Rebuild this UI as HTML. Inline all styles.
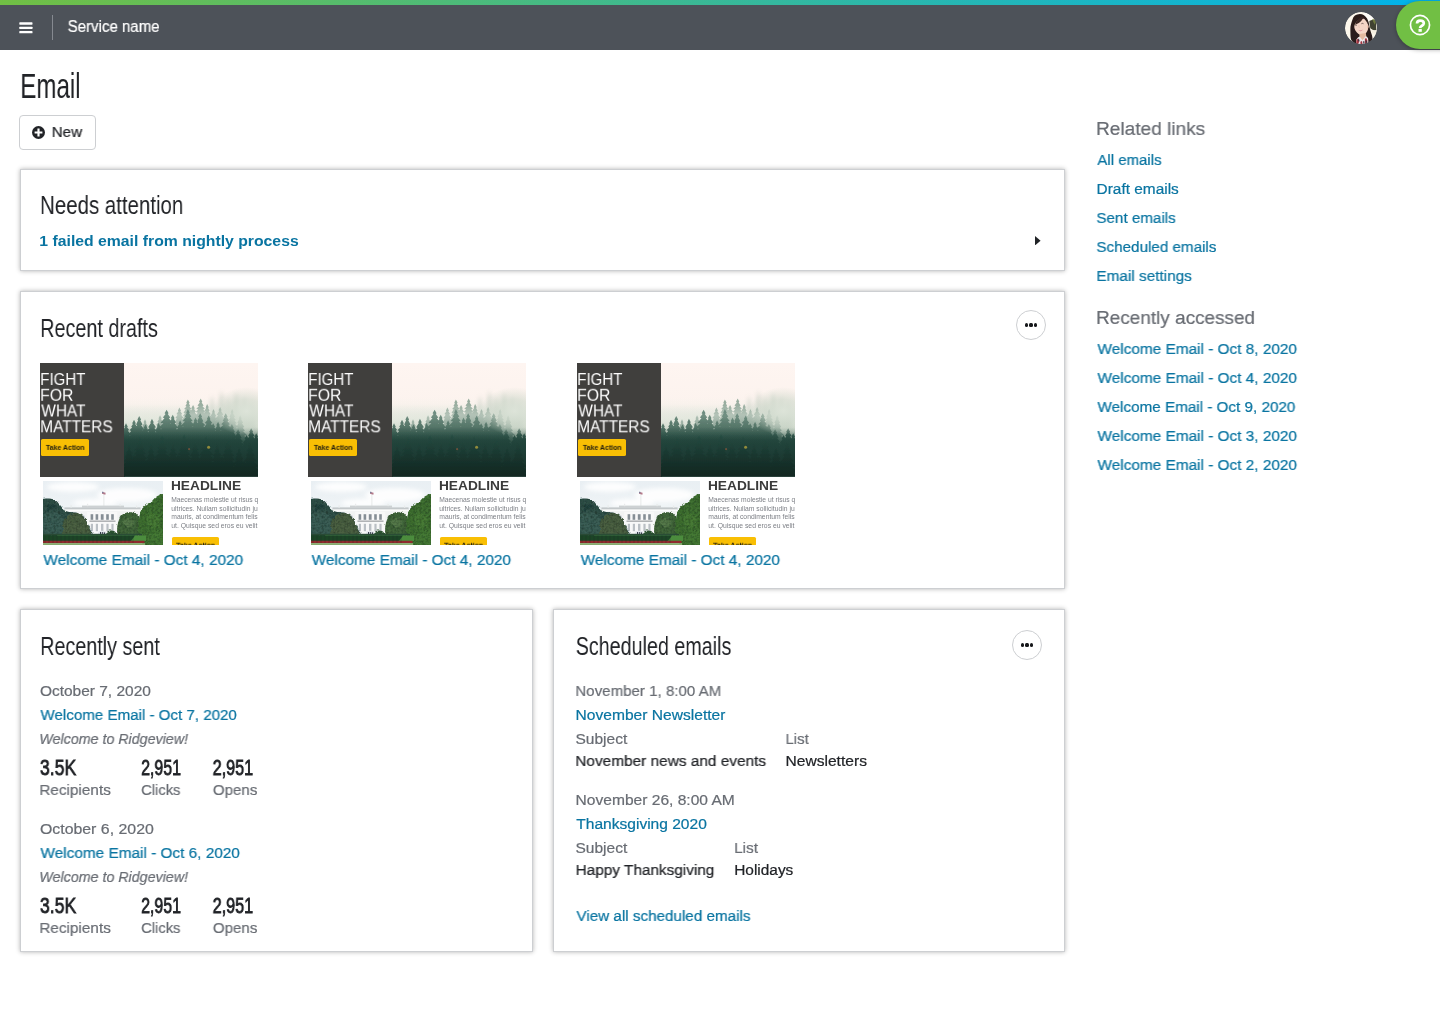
<!DOCTYPE html>
<html lang="en"><head><meta charset="utf-8"><title>Email</title>
<style>
html,body{margin:0;padding:0}
body{width:1440px;height:1032px;position:relative;overflow:hidden;background:#fff;font-family:"Liberation Sans",sans-serif;color:#212327;font-size:15px}
h1,h2,h3,p,button,em,a{margin:0;padding:0;font:inherit}
.t{will-change:transform;position:absolute;display:block;white-space:nowrap;line-height:1;transform-origin:0 0;font-family:"Liberation Sans",sans-serif;font-weight:400;font-style:normal;text-decoration:none;color:#212327}
.t.hd,.thumb .t{-webkit-text-stroke:0}
.t[style*="font-weight:700"]{-webkit-text-stroke:0}
.t{-webkit-text-stroke:.22px currentColor}
.t.lk{color:#0974a1}
.t.gr{color:#686c73}
.t.wh{color:#fff}
.t.num{font-weight:400;color:#212327;-webkit-text-stroke:.85px currentColor}
em.t{font-style:italic}
#topbar{position:absolute;left:0;top:0;width:1440px;height:50px;background:#4d5259}
#rainbow{position:absolute;left:0;top:0;width:1440px;height:5px;background:linear-gradient(to right,#71bf44 0,#00b2ec 100%)}
#burger{position:absolute;left:19px;top:22px;width:16px;height:14px}
#burger svg{display:block}
#vdiv{position:absolute;left:52px;top:15px;width:1px;height:25px;background:#858990}
#avatar{position:absolute;left:1344.8px;top:11.8px;width:32.4px;height:32.4px;border-radius:50%;overflow:hidden}
#avatar svg{display:block}
#help{position:absolute;left:1396px;top:1px;width:60px;height:48px;border-radius:24px 0 0 24px;background:#71bf44;box-shadow:0 1px 4px rgba(0,0,0,.3)}
#help svg{position:absolute;left:13.3px;top:13.4px}
#newbtn{position:absolute;left:19px;top:115px;width:77px;height:35px;box-sizing:border-box;border:1px solid #cdcfd2;border-radius:4px;background:#fff;display:block}
#newbtn svg{position:absolute;left:11.9px;top:10px}
#newbtn .t{margin:-1px 0 0 -1px}
.card{position:absolute;box-sizing:border-box;background:#fff;border:1px solid #cdcfd2;box-shadow:0 0 4.5px rgba(0,0,0,.3)}
.card .t{margin:-1px 0 0 -1px}
.caret{position:absolute;margin:-1px 0 0 -1px;display:block}
.more{position:absolute;margin:-1px 0 0 -1px;width:30px;height:30px;box-sizing:border-box;border:1px solid #cdcfd2;border-radius:50%;background:#fff}
.more i{position:absolute;top:12.1px;width:3.3px;height:3.8px;border-radius:1.5px;background:#15171a}
.more i:nth-child(1){left:7.9px}.more i:nth-child(2){left:12.35px}.more i:nth-child(3){left:16.8px}
.thumb{position:absolute;margin:-1px 0 0 -1px;width:218.1px;height:181.8px;overflow:hidden;background:#fff}
.thumb .dark{position:absolute;left:0;top:0;width:85px;height:113.6px;background:#403f3d}
.thumb .forest{position:absolute;left:84.2px;top:0;display:block}
.thumb .wh{position:absolute;left:3px;top:118px;display:block}
.thumb .t{margin:0}
.thumb .hero{color:#fff}
.thumb .btn{position:absolute;background:#f9bf04;border-radius:1.6px}
.thumb .bt{color:#1c1a12;font-weight:700}
.thumb .hl{color:#3b3b3b;font-weight:700}
.thumb .pp{color:#7c7f85}

</style></head>
<body>
<svg width="0" height="0" style="position:absolute" aria-hidden="true"><defs>
<linearGradient id="fsky" x1="0" y1="0" x2="0" y2="1"><stop offset="0" stop-color="#fef5f1"/><stop offset=".36" stop-color="#fcf3ee"/><stop offset=".5" stop-color="#e6e9df"/><stop offset=".66" stop-color="#b4c3b3"/><stop offset="1" stop-color="#7f9886"/></linearGradient>
<linearGradient id="fdk" x1="0" y1="0" x2="0" y2="1"><stop offset="0" stop-color="#12261f" stop-opacity="0"/><stop offset=".6" stop-color="#12261f" stop-opacity="0"/><stop offset="1" stop-color="#12261f" stop-opacity=".55"/></linearGradient>
<radialGradient id="ffog" cx=".5" cy=".5" r=".5"><stop offset="0" stop-color="#dde4d9" stop-opacity=".92"/><stop offset=".5" stop-color="#cfd9cc" stop-opacity=".62"/><stop offset="1" stop-color="#cfd8cb" stop-opacity="0"/></radialGradient>
<linearGradient id="ffg" gradientUnits="userSpaceOnUse" x1="0" y1="34" x2="0" y2="84"><stop offset="0" stop-color="#8aa393"/><stop offset=".5" stop-color="#56796a"/><stop offset="1" stop-color="#2f564a"/></linearGradient>
<linearGradient id="fmid" gradientUnits="userSpaceOnUse" x1="0" y1="44" x2="0" y2="92"><stop offset="0" stop-color="#64877a"/><stop offset=".3" stop-color="#3b6254"/><stop offset=".7" stop-color="#264a40"/><stop offset="1" stop-color="#1d3d35"/></linearGradient>
<linearGradient id="ffront" gradientUnits="userSpaceOnUse" x1="0" y1="68" x2="0" y2="113"><stop offset="0" stop-color="#2a5247"/><stop offset=".5" stop-color="#1d3f37"/><stop offset="1" stop-color="#132a25"/></linearGradient>
<linearGradient id="fhaze" x1="0" y1="0" x2="0" y2="1"><stop offset="0" stop-color="#eef0e9" stop-opacity="0"/><stop offset=".35" stop-color="#e3e8df" stop-opacity=".45"/><stop offset="1" stop-color="#dfe5dc" stop-opacity="0"/></linearGradient>
<linearGradient id="fhaze2" x1="0" y1="0" x2="0" y2="1"><stop offset="0" stop-color="#e3e9df" stop-opacity=".0"/><stop offset=".3" stop-color="#dfe6db" stop-opacity=".26"/><stop offset=".6" stop-color="#d5ded2" stop-opacity=".2"/><stop offset="1" stop-color="#cfd9cc" stop-opacity="0"/></linearGradient>
<linearGradient id="fmass" x1="0" y1="0" x2="0" y2="1"><stop offset="0" stop-color="#244a40" stop-opacity="0"/><stop offset=".45" stop-color="#234840" stop-opacity=".9"/><stop offset="1" stop-color="#193731"/></linearGradient>
<linearGradient id="wsky" x1="0" y1="0" x2="0" y2="1"><stop offset="0" stop-color="#e9eff3"/><stop offset=".5" stop-color="#f0f4f6"/><stop offset="1" stop-color="#f5f7f7"/></linearGradient>
<filter id="leaf" x="-5%" y="-5%" width="110%" height="110%"><feTurbulence type="fractalNoise" baseFrequency=".32" numOctaves="2" seed="3" result="n"/><feDisplacementMap in="SourceGraphic" in2="n" scale="3.2" xChannelSelector="R" yChannelSelector="G" result="d"/><feTurbulence type="fractalNoise" baseFrequency=".45" numOctaves="2" seed="8" result="n2"/><feColorMatrix in="n2" type="matrix" values="0 0 0 0 0  0 0 0 0 0  0 0 0 0 0  1.8 0 0 0 -.66" result="m"/><feComposite in="m" in2="d" operator="in" result="dk"/><feFlood flood-color="#10221a" flood-opacity=".7"/><feComposite in2="dk" operator="in" result="dk2"/><feMerge><feMergeNode in="d"/><feMergeNode in="dk2"/></feMerge><feGaussianBlur stdDeviation=".3"/></filter>
<filter id="fb0" x="-5%" y="-5%" width="110%" height="110%"><feGaussianBlur stdDeviation=".35"/></filter>
<filter id="fb05" x="-5%" y="-5%" width="110%" height="110%"><feGaussianBlur stdDeviation=".7"/></filter>
<filter id="fb1" x="-5%" y="-5%" width="110%" height="110%"><feGaussianBlur stdDeviation=".9"/></filter>
<filter id="fb2" x="-10%" y="-10%" width="120%" height="120%"><feGaussianBlur stdDeviation="2.2"/></filter>
<symbol id="forest" viewBox="0 0 133.9 113.3" preserveAspectRatio="none">
<rect width="133.9" height="113.3" fill="url(#fsky)"/>
<g filter="url(#fb2)" fill="#93ab9a" opacity=".42"><path d="M97.3 28.3 L98.3 31.0 L97.9 31.5 L99.2 35.1 L98.4 35.7 L99.7 38.7 L98.7 39.2 L100.8 42.3 L99.4 42.8 L100.8 45.4 L99.4 45.9 L101.4 49.1 L99.8 49.6 L103.0 53.3 L100.7 53.8 L102.6 56.1 L100.5 56.6 L103.4 58.8 L100.9 59.3 L104.3 61.4 L101.5 61.9 L105.2 65.3 L102.1 65.9 L105.8 68.3 L88.8 68.3 L92.5 65.9 L89.1 65.3 L93.1 61.9 L90.4 61.4 L93.7 59.3 L91.6 58.8 L94.1 56.6 L92.0 56.1 L93.9 53.8 L91.4 53.3 L94.8 49.6 L92.7 49.1 L95.2 45.9 L93.5 45.4 L95.2 42.8 L94.1 42.3 L95.9 39.2 L94.9 38.7 L96.2 35.7 L95.4 35.1 L96.7 31.5 L96.2 31.0Z M112.0 29.3 L113.1 32.0 L112.6 32.5 L113.8 35.0 L113.1 35.6 L114.6 39.0 L113.5 39.5 L114.9 42.0 L113.7 42.5 L115.7 45.8 L114.2 46.3 L117.0 49.0 L115.0 49.5 L116.6 51.6 L114.8 52.1 L118.3 54.9 L115.8 55.4 L118.4 57.6 L115.8 58.1 L118.0 60.6 L115.6 61.1 L120.1 64.8 L116.9 65.3 L119.3 67.8 L116.4 68.3 L120.5 69.3 L103.5 69.3 L107.6 68.3 L105.4 67.8 L107.1 65.3 L104.6 64.8 L108.4 61.1 L106.2 60.6 L108.2 58.1 L105.2 57.6 L108.2 55.4 L105.8 54.9 L109.2 52.1 L107.0 51.6 L109.0 49.5 L106.6 49.0 L109.8 46.3 L108.0 45.8 L110.3 42.5 L109.4 42.0 L110.5 39.5 L109.6 39.0 L110.9 35.6 L110.0 35.0 L111.4 32.5 L110.9 32.0Z M104.0 33.0 L105.0 35.7 L104.6 36.2 L105.6 39.0 L105.0 39.5 L106.3 41.8 L105.4 42.3 L106.7 45.1 L105.6 45.6 L108.0 49.3 L106.4 49.8 L108.2 53.3 L106.5 53.8 L109.6 57.3 L107.3 57.8 L109.8 61.6 L107.5 62.1 L110.7 65.4 L108.0 65.9 L110.7 68.1 L108.0 68.6 L112.3 71.1 L109.0 71.6 L112.5 73.0 L95.5 73.0 L99.0 71.6 L95.9 71.1 L100.0 68.6 L97.2 68.1 L100.0 65.9 L97.7 65.4 L100.5 62.1 L98.6 61.6 L100.7 57.8 L99.0 57.3 L101.5 53.8 L99.9 53.3 L101.6 49.8 L100.2 49.3 L102.4 45.6 L101.4 45.1 L102.6 42.3 L101.9 41.8 L103.0 39.5 L102.3 39.0 L103.4 36.2 L103.0 35.7Z M120.0 34.0 L121.1 36.7 L120.7 37.2 L121.9 40.2 L121.1 40.8 L122.5 43.1 L121.5 43.6 L122.7 46.0 L121.6 46.5 L123.5 50.2 L122.1 50.7 L124.7 54.2 L122.8 54.7 L124.5 57.0 L122.7 57.5 L126.0 59.9 L123.6 60.4 L126.6 63.9 L124.0 64.4 L127.4 66.7 L124.5 67.2 L127.7 69.7 L124.6 70.2 L127.9 73.2 L124.7 73.8 L128.5 74.0 L111.5 74.0 L115.3 73.8 L111.3 73.2 L115.4 70.2 L111.6 69.7 L115.5 67.2 L113.3 66.7 L116.0 64.4 L113.7 63.9 L116.4 60.4 L114.4 59.9 L117.3 57.5 L115.0 57.0 L117.2 54.7 L115.4 54.2 L117.9 50.7 L116.2 50.2 L118.4 46.5 L117.1 46.0 L118.5 43.6 L117.3 43.1 L118.9 40.8 L118.3 40.2 L119.3 37.2 L118.9 36.7Z M88.0 33.0 L89.0 35.7 L88.6 36.2 L89.6 39.0 L88.9 39.5 L90.4 42.2 L89.4 42.7 L91.2 45.4 L89.9 45.9 L91.9 49.0 L90.3 49.5 L91.8 51.8 L90.3 52.3 L93.3 55.9 L91.2 56.4 L93.8 58.5 L91.5 59.0 L94.1 62.3 L91.6 62.8 L95.0 65.0 L92.2 65.5 L96.2 69.1 L92.9 69.6 L97.4 73.0 L93.7 73.5 L96.5 73.0 L79.5 73.0 L82.3 73.5 L78.9 73.0 L83.1 69.6 L79.4 69.1 L83.8 65.5 L80.6 65.0 L84.4 62.8 L81.2 62.3 L84.5 59.0 L82.2 58.5 L84.8 56.4 L82.1 55.9 L85.7 52.3 L84.7 51.8 L85.7 49.5 L84.0 49.0 L86.1 45.9 L84.4 45.4 L86.6 42.7 L85.8 42.2 L87.1 39.5 L86.6 39.0 L87.4 36.2 L87.1 35.7Z M127.0 38.0 L128.1 40.7 L127.7 41.2 L128.8 44.0 L128.1 44.5 L129.5 47.5 L128.5 48.0 L130.2 51.0 L128.9 51.6 L131.3 54.7 L129.6 55.2 L131.5 58.5 L129.7 59.0 L132.2 62.0 L130.1 62.5 L133.2 64.7 L130.7 65.2 L133.5 68.3 L130.9 68.8 L134.3 72.0 L131.4 72.5 L134.6 76.1 L131.6 76.6 L135.5 78.0 L118.5 78.0 L122.4 76.6 L120.3 76.1 L122.6 72.5 L119.5 72.0 L123.1 68.8 L120.9 68.3 L123.3 65.2 L121.5 64.7 L123.9 62.5 L121.4 62.0 L124.3 59.0 L122.3 58.5 L124.4 55.2 L122.3 54.7 L125.1 51.6 L124.1 51.0 L125.5 48.0 L124.6 47.5 L125.9 44.5 L125.1 44.0 L126.3 41.2 L125.8 40.7Z"/></g>
<g filter="url(#fb05)" opacity=".9"><path fill="url(#ffg)" d="M55.3 44.4 L56.9 47.6 L56.2 48.2 L58.1 50.9 L57.0 51.5 L59.5 54.8 L57.8 55.4 L60.1 59.2 L58.2 59.8 L62.7 63.8 L59.7 64.4 L63.4 67.5 L60.1 68.1 L64.2 70.8 L60.7 71.4 L66.3 75.5 L61.9 76.1 L65.9 79.1 L61.6 79.7 L67.0 82.6 L62.3 83.2 L69.4 86.9 L63.7 87.5 L70.5 90.4 L40.1 90.4 L46.9 87.5 L41.9 86.9 L48.3 83.2 L43.8 82.6 L49.0 79.7 L44.9 79.1 L48.7 76.1 L43.1 75.5 L49.9 71.4 L45.6 70.8 L50.5 68.1 L47.6 67.5 L50.9 64.4 L47.2 63.8 L52.4 59.8 L50.6 59.2 L52.8 55.4 L51.3 54.8 L53.6 51.5 L52.4 50.9 L54.4 48.2 L53.8 47.6Z M63.8 36.5 L65.5 39.7 L64.8 40.3 L66.1 42.8 L65.2 43.4 L67.5 45.9 L66.0 46.5 L68.8 49.6 L66.8 50.2 L69.5 52.8 L67.2 53.4 L70.5 57.5 L67.8 58.1 L72.3 60.6 L68.9 61.2 L73.8 64.8 L69.8 65.4 L75.5 69.8 L70.8 70.4 L75.1 73.7 L70.6 74.3 L78.3 77.6 L72.5 78.2 L78.0 81.2 L72.3 81.8 L79.0 82.5 L48.6 82.5 L55.3 81.8 L48.9 81.2 L55.1 78.2 L50.5 77.6 L57.0 74.3 L53.8 73.7 L56.8 70.4 L53.0 69.8 L57.8 65.4 L53.1 64.8 L58.7 61.2 L55.4 60.6 L59.8 58.1 L57.7 57.5 L60.4 53.4 L58.8 52.8 L60.8 50.2 L59.4 49.6 L61.6 46.5 L60.0 45.9 L62.4 43.4 L61.3 42.8 L62.8 40.3 L62.2 39.7Z M76.6 35.5 L78.2 38.7 L77.5 39.3 L79.5 42.5 L78.4 43.1 L80.7 45.7 L79.1 46.3 L81.3 48.9 L79.4 49.5 L82.7 53.7 L80.3 54.3 L85.1 58.5 L81.7 59.1 L86.1 62.4 L82.3 63.0 L88.0 66.9 L83.5 67.5 L87.6 71.3 L83.2 71.9 L91.9 76.3 L85.8 76.9 L90.9 80.8 L85.2 81.4 L91.8 81.5 L61.4 81.5 L68.0 81.4 L60.9 80.8 L67.4 76.9 L61.2 76.3 L70.0 71.9 L64.5 71.3 L69.7 67.5 L64.8 66.9 L70.9 63.0 L67.8 62.4 L71.5 59.1 L67.2 58.5 L72.9 54.3 L70.4 53.7 L73.8 49.5 L71.7 48.9 L74.1 46.3 L72.2 45.7 L74.8 43.1 L73.4 42.5 L75.7 39.3 L74.9 38.7Z M89.3 45.8 L90.8 49.0 L90.2 49.6 L92.1 52.9 L91.0 53.5 L92.9 56.9 L91.4 57.5 L94.7 60.0 L92.6 60.6 L96.0 63.7 L93.3 64.3 L96.6 67.0 L93.7 67.6 L98.5 71.6 L94.8 72.2 L100.5 75.6 L96.0 76.2 L100.5 79.1 L96.0 79.7 L102.3 83.5 L97.1 84.1 L103.6 88.2 L97.9 88.8 L104.5 91.8 L74.1 91.8 L80.7 88.8 L75.6 88.2 L81.5 84.1 L76.2 83.5 L82.6 79.7 L78.6 79.1 L82.6 76.2 L79.2 75.6 L83.8 72.2 L79.1 71.6 L84.9 67.6 L81.6 67.0 L85.3 64.3 L83.2 63.7 L86.0 60.6 L84.3 60.0 L87.2 57.5 L85.5 56.9 L87.6 53.5 L86.3 52.9 L88.4 49.6 L88.0 49.0Z M69.0 42.0 L70.6 45.2 L70.0 45.8 L71.8 48.6 L70.7 49.2 L73.0 52.7 L71.4 53.3 L74.2 56.7 L72.1 57.3 L75.9 59.8 L73.2 60.4 L77.0 63.6 L73.8 64.2 L78.1 67.6 L74.5 68.2 L78.8 71.7 L74.9 72.3 L79.8 76.5 L75.5 77.1 L81.4 79.8 L76.4 80.4 L83.0 84.6 L77.4 85.2 L84.7 87.9 L78.4 88.5 L84.2 88.0 L53.8 88.0 L59.6 88.5 L51.7 87.9 L60.6 85.2 L55.6 84.6 L61.6 80.4 L55.7 79.8 L62.5 77.1 L58.2 76.5 L63.1 72.3 L58.2 71.7 L63.5 68.2 L60.8 67.6 L64.2 64.2 L60.9 63.6 L64.8 60.4 L62.0 59.8 L65.9 57.3 L63.6 56.7 L66.6 53.3 L65.3 52.7 L67.3 49.2 L65.9 48.6 L68.0 45.8 L67.2 45.2Z M83.0 41.0 L84.6 44.2 L84.0 44.8 L85.4 47.6 L84.5 48.2 L86.6 51.2 L85.2 51.8 L88.1 54.4 L86.0 55.0 L88.7 58.5 L86.4 59.1 L90.3 62.5 L87.4 63.1 L91.7 66.4 L88.2 67.0 L93.0 69.8 L89.0 70.4 L95.0 73.8 L90.2 74.4 L94.6 78.5 L90.0 79.1 L98.5 83.2 L92.3 83.8 L99.9 86.8 L93.1 87.4 L98.2 87.0 L67.8 87.0 L72.9 87.4 L67.3 86.8 L73.7 83.8 L68.2 83.2 L76.0 79.1 L70.7 78.5 L75.8 74.4 L70.6 73.8 L77.0 70.4 L72.6 69.8 L77.8 67.0 L75.0 66.4 L78.6 63.1 L76.0 62.5 L79.6 59.1 L77.7 58.5 L80.0 55.0 L78.4 54.4 L80.8 51.8 L79.3 51.2 L81.5 48.2 L80.4 47.6 L82.0 44.8 L81.6 44.2Z M36.0 52.0 L37.6 55.2 L37.0 55.8 L38.8 58.7 L37.7 59.3 L40.0 61.9 L38.4 62.5 L40.6 66.5 L38.8 67.1 L41.7 70.8 L39.4 71.4 L44.8 75.2 L41.3 75.8 L45.0 78.4 L41.4 79.0 L46.7 82.4 L42.4 83.0 L46.1 85.6 L42.0 86.2 L48.6 89.7 L43.6 90.3 L48.4 93.0 L43.5 93.6 L53.1 97.6 L46.3 98.2 L51.2 98.0 L20.8 98.0 L25.7 98.2 L17.1 97.6 L28.5 93.6 L24.4 93.0 L28.4 90.3 L23.2 89.7 L30.0 86.2 L27.1 85.6 L29.6 83.0 L26.1 82.4 L30.6 79.0 L26.5 78.4 L30.7 75.8 L26.2 75.2 L32.6 71.4 L30.7 70.8 L33.2 67.1 L31.5 66.5 L33.6 62.5 L32.1 61.9 L34.3 59.3 L33.4 58.7 L35.0 55.8 L34.5 55.2Z M21.0 56.0 L22.4 59.2 L21.8 59.8 L23.9 63.1 L22.8 63.7 L25.1 67.1 L23.4 67.7 L25.7 71.3 L23.8 71.9 L27.3 75.9 L24.8 76.5 L29.1 80.4 L25.9 81.0 L30.4 83.8 L26.6 84.4 L32.8 88.5 L28.1 89.1 L33.9 93.3 L28.7 93.9 L34.8 97.5 L29.3 98.1 L36.2 102.0 L5.8 102.0 L12.7 98.1 L5.6 97.5 L13.3 93.9 L8.4 93.3 L13.9 89.1 L8.6 88.5 L15.4 84.4 L12.7 83.8 L16.1 81.0 L13.5 80.4 L17.2 76.5 L14.8 75.9 L18.2 71.9 L16.1 71.3 L18.6 67.7 L17.0 67.1 L19.2 63.7 L18.2 63.1 L20.2 59.8 L19.5 59.2Z M96.0 44.0 L97.5 47.2 L96.9 47.8 L99.2 51.7 L97.9 52.3 L100.6 55.5 L98.8 56.1 L102.0 59.9 L99.6 60.5 L103.2 63.7 L100.3 64.3 L103.9 67.4 L100.8 68.0 L105.5 71.1 L101.7 71.7 L107.5 74.6 L102.9 75.2 L107.9 78.2 L103.2 78.8 L108.4 82.3 L103.4 82.9 L110.9 86.6 L104.9 87.2 L111.2 90.0 L80.8 90.0 L87.1 87.2 L80.2 86.6 L88.6 82.9 L82.1 82.3 L88.8 78.8 L83.9 78.2 L89.1 75.2 L84.0 74.6 L90.3 71.7 L86.2 71.1 L91.2 68.0 L89.0 67.4 L91.7 64.3 L89.5 63.7 L92.4 60.5 L89.7 59.9 L93.2 56.1 L91.0 55.5 L94.1 52.3 L92.6 51.7 L95.1 47.8 L94.4 47.2Z M108.0 46.0 L109.4 49.2 L108.8 49.8 L110.8 53.7 L109.7 54.3 L111.7 56.8 L110.2 57.4 L112.7 60.0 L110.8 60.6 L114.3 64.1 L111.8 64.7 L116.6 68.2 L113.2 68.8 L116.1 72.8 L112.8 73.4 L117.3 77.3 L113.6 77.9 L119.5 80.7 L114.9 81.3 L121.3 84.7 L116.0 85.3 L122.1 89.6 L116.5 90.2 L123.2 92.0 L92.8 92.0 L99.5 90.2 L93.8 89.6 L100.0 85.3 L96.1 84.7 L101.1 81.3 L97.4 80.7 L102.4 77.9 L97.8 77.3 L103.2 73.4 L99.7 72.8 L102.8 68.8 L99.1 68.2 L104.2 64.7 L101.0 64.1 L105.2 60.6 L102.9 60.0 L105.8 57.4 L104.5 56.8 L106.3 54.3 L105.3 53.7 L107.2 49.8 L106.6 49.2Z M116.0 52.0 L117.5 55.2 L116.9 55.8 L118.9 59.5 L117.8 60.1 L120.1 63.9 L118.5 64.5 L120.8 67.4 L118.9 68.0 L122.7 71.9 L120.0 72.5 L123.3 76.4 L120.4 77.0 L124.8 81.3 L121.3 81.9 L127.1 85.2 L122.6 85.8 L128.3 88.7 L123.4 89.3 L129.5 93.1 L124.1 93.7 L131.6 97.8 L125.3 98.4 L131.2 98.0 L100.8 98.0 L106.7 98.4 L101.9 97.8 L107.9 93.7 L100.9 93.1 L108.6 89.3 L102.4 88.7 L109.4 85.8 L103.7 85.2 L110.7 81.9 L106.4 81.3 L111.6 77.0 L107.8 76.4 L112.0 72.5 L108.7 71.9 L113.1 68.0 L111.6 67.4 L113.5 64.5 L112.4 63.9 L114.2 60.1 L113.2 59.5 L115.1 55.8 L114.6 55.2Z"/></g>
<rect y="34" width="133.9" height="50" fill="url(#fhaze)"/>
<g filter="url(#fb05)"><path fill="url(#fmid)" d="M2.0 60.0 L3.8 63.5 L3.1 64.2 L5.1 66.9 L3.9 67.6 L6.8 71.2 L4.9 71.9 L8.2 75.1 L5.7 75.7 L10.0 80.1 L6.8 80.8 L12.6 85.5 L8.3 86.2 L14.4 89.0 L9.5 89.7 L14.5 93.7 L9.5 94.4 L17.0 98.5 L11.0 99.2 L19.6 103.2 L12.6 103.9 L22.3 107.1 L14.2 107.7 L19.4 112.3 L12.4 113.0 L23.0 115.3 L-19.0 115.3 L-8.4 113.0 L-13.5 112.3 L-10.2 107.7 L-20.3 107.1 L-8.6 103.9 L-14.3 103.2 L-7.0 99.2 L-13.3 98.5 L-5.5 94.4 L-9.8 93.7 L-5.5 89.7 L-11.3 89.0 L-4.3 86.2 L-7.9 85.5 L-2.8 80.8 L-7.0 80.1 L-1.7 75.7 L-4.1 75.1 L-0.9 71.9 L-2.8 71.2 L0.1 67.6 L-0.8 66.9 L0.9 64.2 L0.3 63.5Z M10.0 56.7 L11.8 60.2 L11.1 60.9 L13.1 63.7 L11.9 64.4 L14.6 67.2 L12.8 67.9 L15.9 71.9 L13.6 72.6 L17.2 75.7 L14.3 76.3 L18.4 80.8 L15.0 81.5 L21.7 85.9 L17.0 86.6 L22.4 89.7 L17.5 90.3 L24.1 94.8 L18.4 95.4 L25.8 100.2 L19.5 100.9 L30.6 105.2 L22.3 105.8 L27.8 109.3 L20.7 110.0 L28.8 112.8 L21.3 113.4 L32.2 115.3 L-12.2 115.3 L-1.3 113.4 L-9.1 112.8 L-0.7 110.0 L-9.4 109.3 L-2.3 105.8 L-10.2 105.2 L0.5 100.9 L-6.0 100.2 L1.6 95.4 L-4.6 94.8 L2.5 90.3 L-1.7 89.7 L3.0 86.6 L-2.4 85.9 L5.0 81.5 L2.4 80.8 L5.7 76.3 L2.4 75.7 L6.4 72.6 L4.1 71.9 L7.2 67.9 L5.4 67.2 L8.1 64.4 L7.2 63.7 L8.9 60.9 L8.2 60.2Z M15.2 52.9 L17.1 56.4 L16.3 57.1 L18.5 61.4 L17.2 62.1 L20.0 66.2 L18.1 66.8 L22.8 71.1 L19.8 71.7 L23.4 74.7 L20.1 75.4 L24.3 78.8 L20.6 79.5 L28.3 83.4 L23.1 84.0 L28.7 88.7 L23.3 89.3 L29.6 92.6 L23.9 93.3 L34.2 98.0 L26.6 98.6 L33.2 102.1 L26.0 102.7 L34.8 106.3 L27.0 106.9 L38.9 110.8 L29.4 111.5 L38.8 115.3 L-8.4 115.3 L1.0 111.5 L-8.7 110.8 L3.4 106.9 L-3.0 106.3 L4.4 102.7 L-2.2 102.1 L3.8 98.6 L-2.7 98.0 L6.5 93.3 L1.1 92.6 L7.1 89.3 L0.7 88.7 L7.3 84.0 L0.7 83.4 L9.8 79.5 L5.7 78.8 L10.3 75.4 L6.5 74.7 L10.6 71.7 L8.0 71.1 L12.3 66.8 L10.6 66.2 L13.2 62.1 L12.1 61.4 L14.1 57.1 L13.4 56.4Z M27.9 55.7 L29.7 59.2 L29.0 59.9 L31.9 64.2 L30.3 64.8 L32.8 67.5 L30.8 68.2 L35.3 72.1 L32.3 72.7 L35.4 77.2 L32.4 77.8 L37.1 82.2 L33.4 82.9 L41.3 87.1 L36.0 87.8 L40.4 91.8 L35.4 92.5 L42.4 96.5 L36.6 97.2 L45.5 101.5 L38.4 102.2 L46.1 105.7 L38.8 106.3 L48.6 110.5 L40.3 111.1 L50.5 115.3 L5.3 115.3 L15.5 111.1 L7.0 110.5 L17.0 106.3 L7.7 105.7 L17.4 102.2 L9.2 101.5 L19.2 97.2 L14.3 96.5 L20.4 92.5 L14.6 91.8 L19.8 87.8 L15.8 87.1 L22.4 82.9 L19.7 82.2 L23.4 77.8 L20.3 77.2 L23.5 72.7 L20.3 72.1 L25.0 68.2 L22.9 67.5 L25.5 64.8 L24.1 64.2 L26.8 59.9 L26.2 59.2Z M42.6 46.7 L44.5 50.2 L43.7 50.9 L46.2 54.4 L44.8 55.1 L48.3 59.6 L46.0 60.3 L50.7 64.9 L47.4 65.5 L52.0 69.3 L48.2 70.0 L52.8 73.5 L48.7 74.2 L56.5 78.5 L50.9 79.1 L55.1 82.1 L50.1 82.8 L59.6 86.1 L52.8 86.7 L57.4 90.1 L51.5 90.7 L59.4 95.1 L52.7 95.7 L63.0 99.4 L54.9 100.0 L61.6 102.8 L54.0 103.4 L63.6 106.5 L55.2 107.2 L65.1 111.1 L56.1 111.8 L66.1 115.1 L56.7 115.7 L68.5 115.3 L16.7 115.3 L28.5 115.7 L17.7 115.1 L29.1 111.8 L21.8 111.1 L30.0 107.2 L20.5 106.5 L31.2 103.4 L25.1 102.8 L30.3 100.0 L20.1 99.4 L32.5 95.7 L27.6 95.1 L33.7 90.7 L27.3 90.1 L32.4 86.7 L27.4 86.1 L35.1 82.8 L30.3 82.1 L34.3 79.1 L29.1 78.5 L36.5 74.2 L33.3 73.5 L37.0 70.0 L32.6 69.3 L37.8 65.5 L34.2 64.9 L39.2 60.3 L36.5 59.6 L40.4 55.1 L38.8 54.4 L41.5 50.9 L40.5 50.2Z M48.7 51.5 L50.5 55.0 L49.8 55.7 L51.9 59.4 L50.6 60.0 L53.9 64.7 L51.8 65.3 L56.0 70.1 L53.1 70.8 L58.4 73.5 L54.5 74.2 L58.9 77.6 L54.8 78.3 L61.8 81.6 L56.6 82.2 L60.0 85.4 L55.5 86.0 L64.4 89.5 L58.1 90.2 L63.5 94.1 L57.6 94.8 L65.3 98.1 L58.7 98.8 L68.8 102.6 L60.8 103.2 L69.7 106.5 L61.3 107.1 L68.3 111.5 L60.5 112.1 L72.8 115.3 L24.6 115.3 L36.9 112.1 L27.6 111.5 L36.1 107.1 L29.4 106.5 L36.6 103.2 L26.2 102.6 L38.7 98.8 L30.6 98.1 L39.8 94.8 L35.2 94.1 L39.3 90.2 L32.2 89.5 L41.9 86.0 L37.5 85.4 L40.8 82.2 L35.1 81.6 L42.6 78.3 L38.4 77.6 L42.9 74.2 L38.3 73.5 L44.3 70.8 L41.8 70.1 L45.6 65.3 L43.5 64.7 L46.8 60.0 L45.2 59.4 L47.6 55.7 L46.7 55.0Z M63.8 46.0 L65.7 49.5 L65.0 50.2 L67.2 53.4 L65.8 54.1 L68.6 57.8 L66.7 58.4 L71.0 62.4 L68.1 63.0 L72.0 67.4 L68.7 68.1 L74.4 70.9 L70.1 71.6 L75.3 75.4 L70.7 76.1 L76.4 80.5 L71.4 81.2 L77.6 84.0 L72.1 84.7 L79.5 88.9 L73.2 89.5 L81.0 92.4 L74.1 93.1 L85.2 97.8 L76.7 98.5 L84.0 101.2 L75.9 101.8 L86.5 105.0 L77.4 105.6 L90.5 108.3 L79.8 109.0 L89.5 112.1 L79.2 112.7 L89.9 115.3 L37.7 115.3 L48.4 112.7 L39.4 112.1 L47.8 109.0 L35.2 108.3 L50.2 105.6 L41.3 105.0 L51.7 101.8 L42.6 101.2 L50.9 98.5 L41.6 97.8 L53.5 93.1 L46.8 92.4 L54.4 89.5 L47.4 88.9 L55.5 84.7 L50.1 84.0 L56.2 81.2 L51.8 80.5 L56.9 76.1 L53.3 75.4 L57.5 71.6 L54.0 70.9 L58.9 68.1 L54.7 67.4 L59.5 63.0 L57.0 62.4 L60.9 58.4 L58.5 57.8 L61.8 54.1 L60.7 53.4 L62.6 50.2 L62.1 49.5Z M71.4 54.3 L73.2 57.8 L72.5 58.5 L74.6 61.9 L73.3 62.5 L75.8 65.7 L74.0 66.4 L78.3 69.8 L75.6 70.4 L79.1 74.6 L76.0 75.3 L79.8 78.1 L76.5 78.8 L83.1 82.9 L78.4 83.6 L85.2 87.1 L79.7 87.8 L84.3 90.6 L79.1 91.3 L86.3 94.2 L80.3 94.9 L88.3 99.5 L81.5 100.2 L91.8 104.2 L83.6 104.9 L91.0 108.4 L83.1 109.1 L92.6 111.7 L84.1 112.4 L94.5 115.3 L48.3 115.3 L58.7 112.4 L49.2 111.7 L59.7 109.1 L52.2 108.4 L59.2 104.9 L49.5 104.2 L61.3 100.2 L54.5 99.5 L62.5 94.9 L58.0 94.2 L63.7 91.3 L59.6 90.6 L63.1 87.8 L57.3 87.1 L64.4 83.6 L60.6 82.9 L66.3 78.8 L63.8 78.1 L66.8 75.3 L63.1 74.6 L67.2 70.4 L64.4 69.8 L68.8 66.4 L66.8 65.7 L69.5 62.5 L68.1 61.9 L70.3 58.5 L69.7 57.8Z M76.1 50.0 L78.0 53.5 L77.2 54.2 L79.2 58.2 L78.0 58.8 L81.3 62.2 L79.2 62.9 L82.7 66.3 L80.0 67.0 L84.8 71.5 L81.3 72.1 L87.5 76.4 L82.9 77.1 L87.9 80.5 L83.2 81.2 L91.5 85.4 L85.3 86.0 L92.9 90.3 L86.2 90.9 L94.1 95.6 L86.9 96.3 L93.5 99.1 L86.5 99.8 L95.6 104.0 L87.8 104.6 L97.9 108.1 L89.2 108.7 L97.7 113.5 L89.1 114.2 L100.8 115.3 L51.4 115.3 L63.1 114.2 L52.4 113.5 L63.0 108.7 L56.3 108.1 L64.4 104.6 L54.6 104.0 L65.7 99.8 L58.4 99.1 L65.3 96.3 L59.4 95.6 L66.0 90.9 L60.5 90.3 L66.9 86.0 L60.7 85.4 L69.0 81.2 L65.3 80.5 L69.3 77.1 L64.6 76.4 L70.9 72.1 L68.1 71.5 L72.2 67.0 L69.1 66.3 L73.0 62.9 L71.4 62.2 L74.2 58.8 L73.1 58.2 L75.0 54.2 L74.1 53.5Z M84.6 52.4 L86.4 55.9 L85.7 56.6 L88.2 59.8 L86.7 60.5 L89.9 64.9 L87.8 65.6 L91.2 70.0 L88.6 70.7 L93.2 73.8 L89.8 74.5 L94.5 77.6 L90.6 78.2 L94.7 80.9 L90.7 81.6 L98.2 86.3 L92.8 86.9 L100.4 91.1 L94.1 91.7 L102.5 95.7 L95.3 96.3 L102.3 99.4 L95.2 100.1 L104.4 103.6 L96.5 104.2 L104.3 108.0 L96.4 108.7 L108.0 112.0 L98.7 112.7 L108.4 115.3 L60.8 115.3 L70.5 112.7 L63.8 112.0 L72.8 108.7 L64.6 108.0 L72.7 104.2 L66.4 103.6 L74.0 100.1 L68.4 99.4 L73.9 96.3 L68.8 95.7 L75.1 91.7 L69.3 91.1 L76.4 86.9 L71.6 86.3 L78.5 81.6 L73.3 80.9 L78.6 78.2 L75.7 77.6 L79.4 74.5 L75.3 73.8 L80.6 70.7 L77.3 70.0 L81.4 65.6 L79.8 64.9 L82.5 60.5 L80.6 59.8 L83.5 56.6 L82.7 55.9Z M94.0 58.5 L95.7 62.0 L95.0 62.7 L97.5 66.6 L96.1 67.3 L99.5 71.3 L97.3 72.0 L101.0 76.3 L98.2 76.9 L103.8 81.4 L99.9 82.1 L104.7 85.7 L100.4 86.3 L106.3 90.1 L101.4 90.8 L107.5 95.4 L102.1 96.1 L111.7 100.3 L104.6 101.0 L112.9 104.9 L105.3 105.6 L111.1 109.5 L104.3 110.2 L115.0 113.8 L106.6 114.5 L115.5 115.3 L72.5 115.3 L81.4 114.5 L73.5 113.8 L83.7 110.2 L78.4 109.5 L82.7 105.6 L76.0 104.9 L83.4 101.0 L75.3 100.3 L85.9 96.1 L82.0 95.4 L86.6 90.8 L81.9 90.1 L87.6 86.3 L82.2 85.7 L88.1 82.1 L84.4 81.4 L89.8 76.9 L86.1 76.3 L90.7 72.0 L88.2 71.3 L91.9 67.3 L90.6 66.6 L93.0 62.7 L92.1 62.0Z M101.6 50.0 L103.5 53.5 L102.7 54.2 L104.7 57.3 L103.4 58.0 L105.7 61.2 L104.1 61.8 L108.5 66.6 L105.8 67.3 L110.5 70.8 L106.9 71.5 L111.8 75.8 L107.7 76.4 L113.8 79.3 L108.9 79.9 L116.2 83.8 L110.3 84.4 L115.2 87.6 L109.8 88.3 L119.0 91.0 L112.0 91.7 L118.2 95.2 L111.5 95.9 L117.7 98.6 L111.3 99.3 L121.5 102.6 L113.6 103.2 L123.4 108.0 L114.7 108.7 L127.7 112.0 L117.3 112.6 L126.3 115.3 L76.9 115.3 L85.9 112.6 L73.0 112.0 L88.5 108.7 L81.3 108.0 L89.6 103.2 L79.6 102.6 L91.9 99.3 L83.9 98.6 L91.7 95.9 L84.7 95.2 L91.2 91.7 L82.9 91.0 L93.4 88.3 L88.5 87.6 L92.9 84.4 L88.8 83.8 L94.3 79.9 L90.5 79.3 L95.5 76.4 L90.4 75.8 L96.3 71.5 L93.3 70.8 L97.4 67.3 L94.1 66.6 L99.1 61.8 L97.1 61.2 L99.8 58.0 L98.6 57.3 L100.5 54.2 L99.7 53.5Z M107.7 60.9 L109.6 64.4 L108.9 65.1 L110.8 68.8 L109.6 69.4 L112.7 74.2 L110.7 74.9 L115.2 78.0 L112.2 78.6 L116.3 81.5 L112.9 82.2 L118.8 86.8 L114.3 87.4 L119.7 90.4 L114.9 91.0 L119.2 94.7 L114.6 95.3 L123.0 98.6 L116.9 99.3 L122.4 102.3 L116.5 103.0 L124.8 107.4 L117.9 108.0 L127.8 112.6 L119.8 113.3 L128.3 115.3 L87.1 115.3 L95.6 113.3 L88.9 112.6 L97.5 108.0 L90.0 107.4 L98.9 103.0 L92.4 102.3 L98.5 99.3 L93.5 98.6 L100.8 95.3 L96.9 94.7 L100.5 91.0 L94.4 90.4 L101.1 87.4 L96.1 86.8 L102.5 82.2 L99.5 81.5 L103.2 78.6 L101.0 78.0 L104.7 74.9 L102.5 74.2 L105.8 69.4 L104.3 68.8 L106.5 65.1 L105.8 64.4Z M127.0 65.2 L129.0 68.7 L128.2 69.4 L130.4 72.6 L129.0 73.3 L132.2 78.1 L130.1 78.8 L133.1 82.6 L130.7 83.2 L134.8 86.5 L131.7 87.1 L136.1 90.0 L132.5 90.6 L137.4 93.8 L133.3 94.5 L140.8 97.5 L135.3 98.2 L140.6 100.9 L135.1 101.6 L144.0 105.0 L137.2 105.7 L143.9 108.7 L137.1 109.4 L145.9 112.8 L138.3 113.5 L146.0 115.3 L108.0 115.3 L115.7 113.5 L106.8 112.8 L116.9 109.4 L109.5 108.7 L116.8 105.7 L110.0 105.0 L118.9 101.6 L112.6 100.9 L118.7 98.2 L111.6 97.5 L120.7 94.5 L116.4 93.8 L121.5 90.6 L117.3 90.0 L122.3 87.1 L118.6 86.5 L123.3 83.2 L120.7 82.6 L123.9 78.8 L121.8 78.1 L125.0 73.3 L124.0 72.6 L125.8 69.4 L125.0 68.7Z M122.4 71.8 L124.2 75.3 L123.5 76.0 L126.0 80.1 L124.6 80.8 L127.7 83.8 L125.6 84.5 L128.6 88.4 L126.1 89.1 L131.6 93.4 L127.9 94.1 L132.3 97.3 L128.3 97.9 L134.0 101.8 L129.4 102.5 L136.5 106.5 L130.9 107.1 L136.3 111.7 L130.8 112.3 L138.9 115.0 L132.3 115.7 L139.0 115.3 L105.8 115.3 L112.5 115.7 L106.2 115.0 L114.0 112.3 L109.6 111.7 L113.9 107.1 L108.1 106.5 L115.4 102.5 L112.1 101.8 L116.5 97.9 L113.2 97.3 L116.9 94.1 L112.6 93.4 L118.7 89.1 L116.3 88.4 L119.2 84.5 L117.5 83.8 L120.2 80.8 L118.4 80.1 L121.3 76.0 L120.4 75.3Z M21.5 61.0 L23.2 64.5 L22.5 65.2 L24.9 68.0 L23.5 68.6 L26.6 72.5 L24.6 73.1 L27.3 76.1 L25.0 76.8 L29.3 80.1 L26.2 80.7 L30.7 84.0 L27.0 84.6 L31.4 89.1 L27.5 89.7 L34.4 92.7 L29.2 93.4 L33.9 97.8 L29.0 98.4 L35.9 101.9 L30.2 102.5 L38.3 105.3 L31.6 105.9 L38.6 110.7 L31.7 111.4 L42.1 115.3 L0.9 115.3 L11.3 111.4 L4.6 110.7 L11.4 105.9 L3.6 105.3 L12.8 102.5 L5.5 101.9 L14.0 98.4 L9.3 97.8 L13.8 93.4 L7.6 92.7 L15.5 89.7 L12.2 89.1 L16.0 84.6 L13.2 84.0 L16.8 80.7 L13.7 80.1 L18.0 76.8 L16.3 76.1 L18.4 73.1 L16.7 72.5 L19.5 68.6 L18.1 68.0 L20.5 65.2 L19.7 64.5Z M34.5 59.5 L36.1 63.0 L35.5 63.7 L37.9 68.3 L36.6 68.9 L39.6 72.2 L37.6 72.9 L41.8 75.6 L38.9 76.3 L42.2 80.5 L39.1 81.2 L43.8 85.0 L40.1 85.7 L46.0 90.4 L41.4 91.0 L48.9 95.8 L43.1 96.5 L50.6 100.0 L44.2 100.7 L52.4 104.1 L45.2 104.8 L55.2 108.7 L46.9 109.3 L56.6 112.9 L47.8 113.5 L55.6 115.3 L13.4 115.3 L21.2 113.5 L13.0 112.9 L22.1 109.3 L14.0 108.7 L23.8 104.8 L15.0 104.1 L24.8 100.7 L20.1 100.0 L25.9 96.5 L21.7 95.8 L27.6 91.0 L23.5 90.4 L28.9 85.7 L25.3 85.0 L29.9 81.2 L27.3 80.5 L30.1 76.3 L26.8 75.6 L31.4 72.9 L29.9 72.2 L32.4 68.9 L31.2 68.3 L33.5 63.7 L33.0 63.0Z M56.0 57.0 L57.7 60.5 L57.0 61.2 L59.2 64.2 L57.9 64.9 L60.2 68.0 L58.5 68.6 L61.9 72.0 L59.6 72.6 L64.5 76.7 L61.1 77.4 L64.3 80.9 L61.0 81.5 L66.2 85.0 L62.1 85.6 L67.4 88.7 L62.9 89.3 L71.0 94.0 L65.0 94.7 L70.2 98.1 L64.5 98.8 L74.5 102.2 L67.1 102.9 L72.7 107.5 L66.0 108.2 L74.4 111.6 L67.0 112.3 L78.1 115.3 L33.9 115.3 L45.0 112.3 L36.0 111.6 L46.0 108.2 L40.0 107.5 L44.9 102.9 L36.5 102.2 L47.5 98.8 L40.3 98.1 L47.0 94.7 L41.8 94.0 L49.1 89.3 L44.9 88.7 L49.9 85.6 L47.0 85.0 L51.0 81.5 L47.3 80.9 L50.9 77.4 L48.1 76.7 L52.4 72.6 L49.3 72.0 L53.5 68.6 L51.8 68.0 L54.1 64.9 L53.0 64.2 L55.0 61.2 L54.4 60.5Z M89.0 60.0 L90.9 63.5 L90.1 64.2 L92.0 66.9 L90.8 67.6 L92.9 70.3 L91.4 71.0 L94.3 73.7 L92.2 74.4 L95.5 78.2 L92.9 78.9 L98.2 82.1 L94.5 82.7 L98.2 85.7 L94.5 86.4 L100.5 90.6 L95.9 91.2 L101.7 95.8 L96.6 96.4 L103.1 99.8 L97.4 100.5 L106.1 103.2 L99.2 103.8 L109.7 108.3 L101.4 108.9 L111.4 113.0 L102.5 113.7 L110.0 115.3 L68.0 115.3 L75.5 113.7 L68.1 113.0 L76.6 108.9 L69.3 108.3 L78.8 103.8 L71.7 103.2 L80.6 100.5 L76.5 99.8 L81.4 96.4 L76.9 95.8 L82.1 91.2 L77.8 90.6 L83.5 86.4 L80.3 85.7 L83.5 82.7 L79.5 82.1 L85.1 78.9 L82.1 78.2 L85.8 74.4 L83.8 73.7 L86.6 71.0 L85.0 70.3 L87.2 67.6 L86.2 66.9 L87.9 64.2 L87.1 63.5Z M114.0 66.0 L115.9 69.5 L115.1 70.2 L117.5 74.7 L116.1 75.4 L118.9 78.2 L117.0 78.9 L120.1 81.7 L117.7 82.3 L121.5 86.1 L118.5 86.7 L123.4 90.2 L119.6 90.9 L124.4 95.0 L120.3 95.7 L126.5 99.1 L121.5 99.7 L129.2 103.6 L123.1 104.3 L128.1 108.5 L122.5 109.1 L129.6 112.6 L123.4 113.2 L132.7 115.3 L95.3 115.3 L104.6 113.2 L98.7 112.6 L105.5 109.1 L100.3 108.5 L104.9 104.3 L98.6 103.6 L106.5 99.7 L102.6 99.1 L107.7 95.7 L104.6 95.0 L108.4 90.9 L105.3 90.2 L109.5 86.7 L107.1 86.1 L110.3 82.3 L108.1 81.7 L111.0 78.9 L109.2 78.2 L111.9 75.4 L110.4 74.7 L112.9 70.2 L111.9 69.5Z M132.0 70.0 L133.8 73.5 L133.1 74.2 L135.3 77.9 L134.0 78.5 L136.5 81.2 L134.7 81.9 L137.9 85.7 L135.6 86.4 L139.6 89.5 L136.6 90.1 L141.3 94.9 L137.6 95.5 L144.5 100.2 L139.5 100.9 L145.1 104.9 L139.9 105.6 L148.2 108.8 L141.7 109.5 L150.2 112.9 L142.9 113.6 L149.3 115.3 L114.7 115.3 L121.1 113.6 L115.8 112.9 L122.3 109.5 L114.3 108.8 L124.1 105.6 L119.2 104.9 L124.5 100.9 L119.1 100.2 L126.4 95.5 L122.5 94.9 L127.4 90.1 L124.2 89.5 L128.4 86.4 L125.8 85.7 L129.3 81.9 L127.1 81.2 L130.0 78.5 L128.9 77.9 L130.9 74.2 L130.2 73.5Z"/></g>
<rect y="42" width="133.9" height="36" fill="url(#fhaze2)"/>
<rect y="64" width="133.9" height="50" fill="url(#fmass)"/>
<g filter="url(#fb0)"><path fill="url(#ffront)" d="M5.0 82.0 L6.7 85.7 L6.0 86.4 L8.4 90.0 L7.0 90.6 L9.0 93.9 L7.4 94.5 L9.9 97.8 L7.9 98.5 L11.5 102.2 L8.9 102.9 L13.7 107.1 L10.2 107.8 L15.9 111.9 L11.6 112.6 L16.2 115.3 L-6.2 115.3 L-1.6 112.6 L-7.2 111.9 L-0.2 107.8 L-3.9 107.1 L1.1 102.9 L-1.5 102.2 L2.1 98.5 L0.1 97.8 L2.6 94.5 L0.8 93.9 L3.0 90.6 L1.9 90.0 L4.0 86.4 L3.4 85.7Z M16.0 74.0 L17.6 77.7 L17.0 78.4 L19.2 81.9 L17.9 82.5 L21.2 86.9 L19.1 87.6 L22.0 90.7 L19.6 91.4 L23.1 95.4 L20.3 96.1 L25.1 100.6 L21.5 101.3 L25.8 104.6 L21.9 105.3 L26.6 109.3 L22.4 110.0 L27.6 112.9 L22.9 113.6 L29.7 115.3 L2.3 115.3 L9.1 113.6 L3.9 112.9 L9.6 110.0 L6.5 109.3 L10.1 105.3 L6.9 104.6 L10.5 101.3 L7.5 100.6 L11.7 96.1 L9.3 95.4 L12.4 91.4 L10.0 90.7 L12.9 87.6 L10.4 86.9 L14.1 82.5 L12.7 81.9 L15.0 78.4 L14.2 77.7Z M27.0 81.0 L28.7 84.7 L28.0 85.4 L29.9 89.2 L28.7 89.9 L31.3 94.7 L29.6 95.4 L33.8 99.3 L31.1 100.0 L34.5 104.4 L31.5 105.1 L35.9 108.6 L32.4 109.3 L39.0 114.0 L34.2 114.7 L38.5 115.3 L15.5 115.3 L19.8 114.7 L14.8 114.0 L21.6 109.3 L17.5 108.6 L22.5 105.1 L19.1 104.4 L22.9 100.0 L20.3 99.3 L24.4 95.4 L22.9 94.7 L25.3 89.9 L23.9 89.2 L26.0 85.4 L25.2 84.7Z M38.0 72.0 L39.7 75.7 L39.0 76.4 L41.6 81.0 L40.2 81.7 L43.0 85.4 L41.0 86.0 L43.3 89.2 L41.2 89.9 L46.8 94.8 L43.3 95.5 L47.2 99.9 L43.5 100.6 L50.1 104.2 L45.2 104.9 L50.6 107.8 L45.6 108.5 L50.3 111.4 L45.4 112.0 L52.4 115.3 L23.6 115.3 L30.6 112.0 L25.0 111.4 L30.4 108.5 L26.5 107.8 L30.8 104.9 L24.5 104.2 L32.5 100.6 L28.5 99.9 L32.7 95.5 L30.0 94.8 L34.8 89.9 L32.6 89.2 L35.0 86.0 L33.3 85.4 L35.8 81.7 L34.7 81.0 L37.0 76.4 L36.2 75.7Z M49.0 80.0 L50.6 83.7 L49.9 84.4 L51.8 87.2 L50.7 87.9 L53.0 91.5 L51.4 92.2 L54.6 96.9 L52.3 97.6 L57.0 101.7 L53.8 102.4 L58.3 106.1 L54.6 106.8 L58.6 111.4 L54.7 112.1 L62.1 115.1 L56.9 115.8 L60.8 115.3 L37.2 115.3 L41.1 115.8 L36.7 115.1 L43.3 112.1 L40.2 111.4 L43.4 106.8 L39.6 106.1 L44.2 102.4 L40.1 101.7 L45.7 97.6 L43.6 96.9 L46.6 92.2 L44.7 91.5 L47.3 87.9 L46.2 87.2 L48.1 84.4 L47.5 83.7Z M60.0 71.0 L61.6 74.7 L60.9 75.4 L62.8 78.2 L61.7 78.9 L64.1 83.1 L62.5 83.8 L65.6 87.6 L63.4 88.3 L66.2 91.2 L63.7 91.9 L67.4 95.4 L64.4 96.0 L71.0 99.9 L66.6 100.6 L71.4 105.4 L66.9 106.0 L72.8 110.7 L67.7 111.4 L74.7 115.3 L45.3 115.3 L52.3 111.4 L48.5 110.7 L53.1 106.0 L48.8 105.4 L53.4 100.6 L49.7 99.9 L55.6 96.0 L53.2 95.4 L56.3 91.9 L53.2 91.2 L56.6 88.3 L54.7 87.6 L57.5 83.8 L56.2 83.1 L58.3 78.9 L57.4 78.2 L59.1 75.4 L58.5 74.7Z M71.0 79.0 L72.7 82.7 L72.0 83.4 L74.3 86.8 L73.0 87.5 L75.8 92.5 L73.9 93.2 L76.9 97.6 L74.6 98.3 L77.9 101.5 L75.2 102.1 L80.7 105.7 L76.8 106.4 L80.2 110.4 L76.5 111.1 L83.1 115.3 L58.9 115.3 L65.5 111.1 L62.5 110.4 L65.2 106.4 L61.8 105.7 L66.8 102.1 L64.8 101.5 L67.4 98.3 L65.8 97.6 L68.1 93.2 L65.9 92.5 L69.0 87.5 L67.4 86.8 L70.0 83.4 L69.2 82.7Z M82.0 73.0 L83.5 76.7 L82.9 77.4 L85.6 82.0 L84.2 82.7 L87.1 86.4 L85.1 87.1 L89.3 91.6 L86.4 92.3 L90.0 97.2 L86.8 97.9 L92.6 101.2 L88.3 101.9 L92.3 106.0 L88.2 106.7 L95.0 110.3 L89.8 111.0 L96.3 114.6 L90.6 115.3 L96.0 115.3 L68.0 115.3 L73.4 115.3 L68.2 114.6 L74.2 111.0 L68.1 110.3 L75.8 106.7 L72.0 106.0 L75.7 101.9 L72.6 101.2 L77.2 97.9 L73.6 97.2 L77.6 92.3 L75.4 91.6 L78.9 87.1 L76.5 86.4 L79.8 82.7 L78.2 82.0 L81.1 77.4 L80.5 76.7Z M93.0 81.0 L94.8 84.7 L94.1 85.4 L95.7 88.3 L94.6 89.0 L97.4 92.3 L95.6 93.0 L98.2 97.3 L96.1 98.0 L99.7 101.1 L97.0 101.8 L101.0 104.5 L97.8 105.2 L102.5 108.7 L98.7 109.4 L104.7 112.7 L100.0 113.3 L104.5 115.3 L81.5 115.3 L86.0 113.3 L81.8 112.7 L87.3 109.4 L82.5 108.7 L88.2 105.2 L85.1 104.5 L89.0 101.8 L86.5 101.1 L89.9 98.0 L88.3 97.3 L90.4 93.0 L88.6 92.3 L91.4 89.0 L90.1 88.3 L91.9 85.4 L91.3 84.7Z M104.0 76.0 L105.5 79.7 L104.9 80.4 L107.4 84.1 L106.1 84.8 L108.7 88.5 L106.8 89.2 L110.1 92.6 L107.6 93.3 L110.6 96.8 L107.9 97.5 L112.1 102.5 L108.9 103.2 L114.8 106.8 L110.5 107.5 L117.2 111.7 L111.9 112.4 L117.1 115.3 L90.9 115.3 L96.1 112.4 L89.7 111.7 L97.5 107.5 L94.0 106.8 L99.1 103.2 L95.6 102.5 L100.1 97.5 L97.7 96.8 L100.4 93.3 L97.3 92.6 L101.2 89.2 L99.6 88.5 L101.9 84.8 L100.8 84.1 L103.1 80.4 L102.3 79.7Z M115.0 84.0 L116.7 87.7 L116.0 88.4 L118.1 91.4 L116.9 92.1 L119.5 95.9 L117.7 96.6 L120.3 100.2 L118.2 100.9 L122.2 105.0 L119.3 105.7 L123.7 109.9 L120.2 110.6 L126.5 114.7 L121.9 115.4 L125.5 115.3 L104.5 115.3 L108.1 115.4 L104.5 114.7 L109.8 110.6 L106.1 109.9 L110.7 105.7 L108.6 105.0 L111.8 100.9 L109.6 100.2 L112.3 96.6 L110.6 95.9 L113.1 92.1 L111.8 91.4 L114.0 88.4 L113.3 87.7Z M126.0 80.0 L127.8 83.7 L127.1 84.4 L129.2 87.8 L127.9 88.5 L130.8 92.2 L128.9 92.9 L132.2 98.0 L129.7 98.6 L134.3 103.3 L131.0 104.0 L136.4 108.7 L132.3 109.4 L136.2 114.4 L132.1 115.1 L137.8 115.3 L114.2 115.3 L119.9 115.1 L114.9 114.4 L119.7 109.4 L115.5 108.7 L121.0 104.0 L116.9 103.3 L122.3 98.6 L120.2 98.0 L123.1 92.9 L121.6 92.2 L124.1 88.5 L122.4 87.8 L124.9 84.4 L124.1 83.7Z M10.0 92.0 L11.6 95.7 L11.0 96.4 L13.1 100.2 L11.9 100.9 L14.1 104.1 L12.5 104.8 L15.6 107.7 L13.4 108.4 L16.5 112.3 L13.9 113.0 L18.0 115.3 L2.0 115.3 L6.1 113.0 L3.0 112.3 L6.6 108.4 L4.0 107.7 L7.5 104.8 L5.7 104.1 L8.1 100.9 L6.6 100.2 L9.0 96.4 L8.3 95.7Z M32.0 94.0 L33.8 97.7 L33.1 98.4 L35.7 103.2 L34.2 103.9 L36.3 107.5 L34.6 108.2 L38.8 111.7 L36.1 112.4 L39.3 115.3 L24.7 115.3 L27.9 112.4 L24.7 111.7 L29.4 108.2 L28.1 107.5 L29.8 103.9 L28.6 103.2 L30.9 98.4 L30.2 97.7Z M54.0 91.0 L55.6 94.7 L54.9 95.4 L57.5 100.1 L56.1 100.8 L59.1 103.7 L57.1 104.4 L60.7 108.6 L58.0 109.3 L61.7 112.5 L58.6 113.2 L62.3 115.3 L45.7 115.3 L49.4 113.2 L46.4 112.5 L50.0 109.3 L46.9 108.6 L50.9 104.4 L49.2 103.7 L51.9 100.8 L50.2 100.1 L53.1 95.4 L52.5 94.7Z M76.0 95.0 L77.6 98.7 L77.0 99.4 L79.1 103.6 L77.8 104.3 L80.5 108.6 L78.7 109.3 L82.4 113.7 L79.9 114.4 L83.0 115.3 L69.0 115.3 L72.1 114.4 L70.2 113.7 L73.3 109.3 L71.9 108.6 L74.2 104.3 L72.8 103.6 L75.0 99.4 L74.4 98.7Z M98.0 93.0 L99.8 96.7 L99.1 97.4 L100.8 101.0 L99.7 101.6 L102.9 106.0 L101.0 106.7 L103.8 110.2 L101.5 110.8 L105.4 115.1 L102.4 115.7 L105.6 115.3 L90.4 115.3 L93.6 115.7 L90.0 115.1 L94.5 110.8 L92.6 110.2 L95.0 106.7 L93.2 106.0 L96.3 101.6 L94.8 101.0 L96.9 97.4 L96.1 96.7Z M120.0 97.0 L121.7 100.7 L121.0 101.4 L123.3 106.3 L122.0 107.0 L124.8 110.3 L122.9 111.0 L126.4 115.3 L113.6 115.3 L117.1 111.0 L115.4 110.3 L118.0 107.0 L116.5 106.3 L119.0 101.4 L118.3 100.7Z"/></g>
<ellipse cx="122" cy="48" rx="34" ry="24" fill="url(#ffog)"/>
<rect width="133.9" height="113.3" fill="url(#fdk)"/>
<circle cx="84.5" cy="84" r="1.5" fill="#b9a53c" opacity=".75" filter="url(#fb0)"/>
<circle cx="65" cy="86" r="1.1" fill="#9a5a3a" opacity=".6" filter="url(#fb0)"/>
</symbol><symbol id="whouse" viewBox="0 0 120 64">
<rect width="120" height="64" fill="url(#wsky)"/>
<g filter="url(#fb2)" fill="#fff" opacity=".9"><ellipse cx="30" cy="6" rx="26" ry="5"/><ellipse cx="84" cy="14" rx="30" ry="7"/><ellipse cx="52" cy="22" rx="22" ry="4"/></g>
<g filter="url(#fb0)">
<path d="M60.9 26 V12.5" stroke="#b9bec2" stroke-width=".35"/>
<path d="M59 10.8 L62.6 11.8 L62.4 13.8 L59 12.8Z" fill="#b47a8a"/>
<rect x="59" y="10.8" width="1.4" height="1.3" fill="#7a7f9c"/>
<rect x="21.4" y="26.4" width="76.2" height="2.4" fill="#c3c8ca"/>
<rect x="39" y="24.6" width="42" height="2.4" fill="#cdd1d3"/>
<g fill="#e9ebec"><rect x="27.5" y="24.2" width="1.2" height="2.4"/><rect x="44" y="22.8" width="1.2" height="2.4"/><rect x="76.5" y="22.8" width="1.2" height="2.4"/><rect x="93" y="24.6" width="1.2" height="2.2"/></g>
<rect x="21.8" y="28.6" width="75.6" height="24" fill="#f2f3f3"/>
<rect x="21.8" y="28.6" width="75.6" height="1.6" fill="#fbfbfb"/>
<path d="M44.2 31 H74.2 V53.5 H44.2Z" fill="#f8f8f8"/>
<g fill="#868e95"><rect x="47.6" y="33.2" width="2.6" height="5.6"/><rect x="52.6" y="33.2" width="2.6" height="5.6"/><rect x="57.8" y="33.2" width="2.8" height="5.6"/><rect x="63.2" y="33.2" width="2.6" height="5.6"/><rect x="68.2" y="33.2" width="2.6" height="5.6"/></g>
<g fill="#b0b6bb" opacity=".85"><rect x="47.8" y="42.8" width="2.2" height="7.4"/><rect x="52.8" y="42.8" width="2.2" height="7.4"/><rect x="58" y="42.8" width="2.4" height="7.4"/><rect x="63.4" y="42.8" width="2.2" height="7.4"/><rect x="68.4" y="42.8" width="2.2" height="7.4"/></g>
<g fill="#8c98a3" opacity=".75"><rect x="39.6" y="34.6" width="1.8" height="3.6"/><rect x="76.8" y="34.6" width="1.8" height="3.6"/><rect x="39.6" y="44" width="1.8" height="4"/><rect x="76.8" y="44" width="1.8" height="4"/></g>
<rect x="46.5" y="39.6" width="26" height="1.1" fill="#3f4549" opacity=".55"/>
</g>
<g filter="url(#leaf)">
<path d="M-6 19 C5 16.5 10 17 14 20.5 C16 23 19 26 20.5 29 C23 30.5 27 31 31 31.5 C36 31.5 40 34 42 38 C45 43 47 47 49.5 52 L50 55 L-6 55Z" fill="#33514a"/>
<path d="M-6 36 C6 30 14 30 18 35 C22 38 26 44 27 50 L28 55 L-6 55Z" fill="#3b5d55"/>
<path d="M20 42 C22 35 28 31.5 34 32 C40 33 43 39 45 44 C47 48 48 51 49.5 54 L20 55Z" fill="#4b6142"/>
<path d="M4 24 C8 21 13 23 15 27 C12 27 8 28 5 31Z" fill="#284540"/>
<path d="M74.5 54 C73 45 76 36 80 33 C84 30.5 90 30.5 93.5 33 C96.5 36 97 41 97.5 46 L98.5 55 L74 55Z" fill="#42663b"/>
<path d="M80 40 C83 36 89 36 91 40 C92 44 88 47 84 46Z" fill="#5a7d4c" opacity=".8"/>
<path d="M95.5 55 C94.5 44 96 34 99 28 C102 24 106 22 109 20 C112 16 116 13.5 120 13 L126 13 L126 70 L101 70 C101.5 60 98 58 95.5 55Z" fill="#3f6f33"/>
<path d="M104 34 C108 30 115 31 117 37 C119 44 113 48 107 47 C104 44 102 38 104 34Z" fill="#4d8439" opacity=".5"/>
<path d="M108 50 C112 47 118 48 122 52 L126 70 L104 70 C103 58 105 53 108 50Z" fill="#4a8236" opacity=".5"/>
<path d="M62 54 C63 50 67 48.5 71 50 C73 51 74 53 74 55 L62 55Z" fill="#2f5533"/>
</g>
<g filter="url(#fb0)">
<path d="M54.8 55 L55.4 50.6 C57 49.4 61.5 49.4 63.2 50.6 L63.8 55Z" fill="#e6e9ee"/>
<rect x="57" y="51" width="1.2" height="4" fill="#353b4a"/><rect x="59.2" y="51" width="1" height="4" fill="#353b4a"/><rect x="61" y="51.4" width="1.1" height="3.6" fill="#353b4a"/>
<rect x="0" y="52.8" width="99" height="2" fill="#2b4a36"/>
<rect x="0" y="54.2" width="94" height="5.8" fill="#1e4528"/>
<rect x="14" y="53.8" width="80" height="1.1" fill="#2f6038"/>
<path d="M92 54.6 H103 V60 H88Z" fill="#4c8c3d"/>
<rect x="0" y="59.8" width="101.5" height="2.3" fill="#8f2a2e"/>
<rect x="0" y="62.1" width="102" height="1.9" fill="#86ab6e"/>
<path d="M2 54.5V62M6 54.5V62M10 54.5V62M14 54.5V62M18 54.5V62M22 54.5V62M26 54.5V62M30 54.5V62M34 54.5V62M38 54.5V62M42 54.5V62M46 54.5V62M50 54.5V62M54 54.5V62M58 54.5V62M62 54.5V62M66 54.5V62M70 54.5V62M74 54.5V62M78 54.5V62M82 54.5V62M86 54.5V62M90 54.5V62" stroke="#14261a" stroke-width=".45" opacity=".6"/>
</g>
</symbol>
</defs></svg>

<header id="topbar">
<div id="rainbow"></div>
<div id="burger"><svg width="16" height="14" viewBox="0 0 16 14"><g fill="#fff"><rect x=".3" y=".35" width="13.2" height="2.3" rx=".6"/><rect x=".3" y="4.75" width="13.2" height="2.3" rx=".6"/><rect x=".3" y="9.05" width="13.2" height="2.3" rx=".6"/></g></svg></div>
<div id="vdiv"></div>
<span class="t wh" style="left:0;top:19.00px;font-size:15.8px;transform:translateX(67.70px) scaleX(0.9511);">Service name</span>
<div id="avatar"><svg viewBox="0 0 32 32" width="32.4" height="32.4">
<defs><clipPath id="avc"><circle cx="16" cy="16" r="16"/></clipPath>
<filter id="avb" x="-10%" y="-10%" width="120%" height="120%"><feGaussianBlur stdDeviation="0.6"/></filter></defs>
<g clip-path="url(#avc)"><g filter="url(#avb)">
<rect x="-2" y="-2" width="36" height="36" fill="#fdf8ec"/>
<path d="M18 0 C24 1 28 5 29 9 L22 10Z" fill="#fffdf8"/>
<path d="M24 9 C26 7.5 29 7 30.5 8.5 L31 18 C29 18.5 26.5 17.5 25 16Z" fill="#3f4230"/>
<path d="M27 7 C28.5 6.5 30 7.5 30.5 9.5 L29.5 12.5 C28.5 11 27.5 9.5 27 7Z" fill="#7f8c44" opacity=".75"/>
<path d="M25.5 17.5 C27.5 18.5 30 18.5 32 17.5 L32 22 L27 21Z" fill="#f6efe0"/>
<path d="M14.7 2 C10.5 2.2 8.2 4.2 7.4 7.5 C6.2 11 5.2 14 5.3 17 C5.4 21 5.3 24 5.9 27 C7 29.5 9 31 11.5 31.5 L13.5 25 L21 24.5 L23 30.5 C25.5 29.5 27.3 28.5 27.2 26.5 C27 24 26.5 22.5 25.8 20.5 C25 18 24.6 16.5 24.2 14.5 C23.8 11.5 23.2 9 21.8 6.5 C20.2 3.8 17.6 2 14.7 2Z" fill="#2a1c1a"/>
<path d="M9.2 13.8 C9.6 11.2 11.4 9.2 13.6 8 C15.8 6.8 18.2 6.4 19.8 7.2 C21.8 8.4 22.8 11 23 13.6 C23.2 16.4 22.4 18.8 21 20.6 C19.6 22.2 17.8 23.2 16.2 23 C14 22.6 12 21 10.6 18.8 C9.6 17.2 9 15.4 9.2 13.8Z" fill="#f4d5c6"/>
<path d="M21.8 13.2 C22.6 12.8 23.4 13.4 23.3 14.6 C23.2 15.8 22.4 16.6 21.8 16.4Z" fill="#eec2ae"/>
<path d="M18.6 4.4 C16 5 13.4 6.6 11.6 8.6 C10 10.4 9 12.4 8.8 14.4 C8.2 12 8.4 9 9.8 6.6 C11.4 4.2 14.6 3 17.6 3.6Z" fill="#2a1c1a"/>
<path d="M18.4 4.6 C17.6 7 16 9.2 13.6 10.8 C12.4 11.6 11 12.2 9.8 12.6 C10.6 10 12.4 7.4 14.8 5.8 C16 5 17.2 4.6 18.4 4.6Z" fill="#3a2622"/>
<path d="M19 5.4 C20.4 6 21.6 7.4 22.2 9.2 C22.6 10.4 22.8 11.6 22.8 12.6 C22 10.6 20.8 8.6 19.4 7.2Z" fill="#2a1c1a"/>
<path d="M14.4 21.8 L20.6 20.8 L21.2 25.2 L17.6 28 L14 26Z" fill="#e3b9a0"/>
<path d="M11.2 27.2 C12.2 25.4 13.4 24.6 14.6 24.4 L17.4 27.8 L20.2 24 C21.4 24.2 22.2 24.8 22.8 26 L23.4 32.5 L10.6 32.5Z" fill="#ece6e8"/>
<path d="M11.4 27.4 L13.2 26.2 L14.2 29 L12.6 32.5 L10.8 32.5Z M19.6 26.4 L21 25.6 L22.2 28.4 L21.6 32.5 L19.8 32.5Z M15.2 29.4 L16.8 28.6 L17.4 32.5 L15.4 32.5Z" fill="#a3343f"/>
<path d="M13.2 26.4 L14.4 27.6 L13.8 29.4 L12.8 28.2Z M20.4 27.8 L21.8 28.6 L21.6 30.6 L20.4 30Z M17.8 29.2 L19 28.6 L19.4 31 L18.2 31.4Z" fill="#3b3340"/>
<path d="M13.2 17.6 C14.4 18.6 16 18.6 17.5 17.4 C16.6 19.2 14.4 19.6 13.2 17.6Z" fill="#d77f8e"/>
<path d="M10 13.2 C10.6 12.8 11.4 12.9 11.8 13.5 M16.2 11.6 C16.9 11.1 17.8 11.1 18.3 11.6" stroke="#4a3a3a" stroke-width="0.75" fill="none"/>
<path d="M13.8 13 C13.6 14.2 13.7 15 14.2 15.6" stroke="#e5b9a6" stroke-width="0.6" fill="none"/>
</g></g></svg></div>
<div id="help"><svg viewBox="0 0 22 22" width="22" height="22">
<circle cx="11" cy="11" r="9.55" fill="none" stroke="#fff" stroke-width="1.7"/>
<path d="M8.0 9.5 C8.0 7.6 9.3 6.6 11.1 6.6 C13.2 6.6 14.8 7.6 14.8 9.2 C14.8 10.6 13.9 11.1 12.7 11.9 C11.6 12.6 11.1 13.0 11.1 14.1" fill="none" stroke="#fff" stroke-width="2.7"/>
<rect x="9.5" y="14.9" width="3.3" height="2.9" fill="#fff"/></svg></div>
</header>
<main>
<h1 class="t hd" style="left:0;top:69.00px;font-size:34.5px;transform:translateX(20.27px) scaleX(0.6991);">Email</h1>
<button id="newbtn"><svg viewBox="0 0 14 14" width="13" height="13"><circle cx="7" cy="7" r="7" fill="#212327"/><path d="M2.8 7h8.4M7 2.8v8.4" stroke="#fff" stroke-width="2.3"/></svg>
<span class="t" style="left:0;top:9.00px;font-size:15.4px;transform:translateX(32.68px) scaleX(0.9884);">New</span>
</button>
<section class="card" id="attention" style="left:20px;top:169px;width:1045px;height:102px">
<h2 class="t hd" style="left:0;top:24.00px;font-size:25.6px;transform:translateX(20.06px) scaleX(0.7989);">Needs attention</h2>
<a class="t lk" style="left:0;top:64.00px;font-size:15.4px;transform:translateX(19.35px) scaleX(1.0243);font-weight:700;" href="#">1 failed email from nightly process</a>
<svg class="caret" style="left:1015px;top:67px" width="6" height="9.4" viewBox="0 0 6 9.4"><path d="M0 0L5.6 4.7L0 9.4Z" fill="#212327"/></svg>
</section>
<section class="card" id="drafts" style="left:20px;top:291px;width:1045px;height:298px">
<h2 class="t hd" style="left:0;top:25.00px;font-size:25.6px;transform:translateX(20.22px) scaleX(0.7725);">Recent drafts</h2>
<div class="more" style="left:996px;top:19px"><i></i><i></i><i></i></div>
<div class="thumb" style="left:20.2px;top:72px"><div class="dark"></div>
<span class="t hero" style="left:0;top:0;font-size:15.8px;transform:translate(0.19px,9.00px) scaleX(0.9548);">FIGHT</span>
<span class="t hero" style="left:0;top:0;font-size:15.8px;transform:translate(0.14px,24.80px) scaleX(0.9948);">FOR</span>
<span class="t hero" style="left:0;top:0;font-size:15.8px;transform:translate(1.32px,40.50px) scaleX(0.9733);">WHAT</span>
<span class="t hero" style="left:0;top:0;font-size:15.8px;transform:translate(0.17px,56.30px) scaleX(0.9760);">MATTERS</span>
<div class="btn" style="left:1.1px;top:76px;width:47.5px;height:17.3px"></div>
<span class="t bt" style="left:0;top:0;font-size:7.1px;transform:translate(5.83px,81.90px) scaleX(0.9860);font-weight:700;">Take Action</span>
<svg class="forest" width="134.1" height="113.6" preserveAspectRatio="none"><use href="#forest"/></svg>
<svg class="wh" width="120" height="64"><use href="#whouse"/></svg>
<span class="t hl" style="left:0;top:0;font-size:12.9px;transform:translate(130.91px,116.80px) scaleX(1.0645);font-weight:700;">HEADLINE</span>
<span class="t pp" style="left:0;top:0;font-size:6.7px;transform:translate(131.16px,134.20px) scaleX(1.0055);">Maecenas molestie ut risus q</span>
<span class="t pp" style="left:0;top:0;font-size:6.7px;transform:translate(131.26px,142.70px) scaleX(1.0109);">ultrices. Nullam sollicitudin jus</span>
<span class="t pp" style="left:0;top:0;font-size:6.7px;transform:translate(131.26px,151.20px) scaleX(1.0155);">mauris, at condimentum felis</span>
<span class="t pp" style="left:0;top:0;font-size:6.7px;transform:translate(131.26px,159.75px) scaleX(1.0175);">ut. Quisque sed eros eu velit</span>
<div class="btn" style="left:132px;top:173.8px;width:47.3px;height:17.3px"></div>
<span class="t bt" style="left:0;top:0;font-size:7.1px;transform:translate(136.33px,179.70px) scaleX(0.9860);font-weight:700;">Take Action</span>
</div>
<a class="t lk" style="left:0;top:261.00px;font-size:15.4px;transform:translateX(23.43px) scaleX(0.9996);" href="#">Welcome Email - Oct 4, 2020</a>
<div class="thumb" style="left:288.1px;top:72px"><div class="dark"></div>
<span class="t hero" style="left:0;top:0;font-size:15.8px;transform:translate(0.19px,9.00px) scaleX(0.9548);">FIGHT</span>
<span class="t hero" style="left:0;top:0;font-size:15.8px;transform:translate(0.14px,24.80px) scaleX(0.9948);">FOR</span>
<span class="t hero" style="left:0;top:0;font-size:15.8px;transform:translate(1.32px,40.50px) scaleX(0.9733);">WHAT</span>
<span class="t hero" style="left:0;top:0;font-size:15.8px;transform:translate(0.17px,56.30px) scaleX(0.9760);">MATTERS</span>
<div class="btn" style="left:1.1px;top:76px;width:47.5px;height:17.3px"></div>
<span class="t bt" style="left:0;top:0;font-size:7.1px;transform:translate(5.83px,81.90px) scaleX(0.9860);font-weight:700;">Take Action</span>
<svg class="forest" width="134.1" height="113.6" preserveAspectRatio="none"><use href="#forest"/></svg>
<svg class="wh" width="120" height="64"><use href="#whouse"/></svg>
<span class="t hl" style="left:0;top:0;font-size:12.9px;transform:translate(130.91px,116.80px) scaleX(1.0645);font-weight:700;">HEADLINE</span>
<span class="t pp" style="left:0;top:0;font-size:6.7px;transform:translate(131.16px,134.20px) scaleX(1.0055);">Maecenas molestie ut risus q</span>
<span class="t pp" style="left:0;top:0;font-size:6.7px;transform:translate(131.26px,142.70px) scaleX(1.0109);">ultrices. Nullam sollicitudin jus</span>
<span class="t pp" style="left:0;top:0;font-size:6.7px;transform:translate(131.26px,151.20px) scaleX(1.0155);">mauris, at condimentum felis</span>
<span class="t pp" style="left:0;top:0;font-size:6.7px;transform:translate(131.26px,159.75px) scaleX(1.0175);">ut. Quisque sed eros eu velit</span>
<div class="btn" style="left:132px;top:173.8px;width:47.3px;height:17.3px"></div>
<span class="t bt" style="left:0;top:0;font-size:7.1px;transform:translate(136.33px,179.70px) scaleX(0.9860);font-weight:700;">Take Action</span>
</div>
<a class="t lk" style="left:0;top:261.00px;font-size:15.4px;transform:translateX(291.64px) scaleX(0.9976);" href="#">Welcome Email - Oct 4, 2020</a>
<div class="thumb" style="left:557.1px;top:72px"><div class="dark"></div>
<span class="t hero" style="left:0;top:0;font-size:15.8px;transform:translate(0.19px,9.00px) scaleX(0.9548);">FIGHT</span>
<span class="t hero" style="left:0;top:0;font-size:15.8px;transform:translate(0.14px,24.80px) scaleX(0.9948);">FOR</span>
<span class="t hero" style="left:0;top:0;font-size:15.8px;transform:translate(1.32px,40.50px) scaleX(0.9733);">WHAT</span>
<span class="t hero" style="left:0;top:0;font-size:15.8px;transform:translate(0.17px,56.30px) scaleX(0.9760);">MATTERS</span>
<div class="btn" style="left:1.1px;top:76px;width:47.5px;height:17.3px"></div>
<span class="t bt" style="left:0;top:0;font-size:7.1px;transform:translate(5.83px,81.90px) scaleX(0.9860);font-weight:700;">Take Action</span>
<svg class="forest" width="134.1" height="113.6" preserveAspectRatio="none"><use href="#forest"/></svg>
<svg class="wh" width="120" height="64"><use href="#whouse"/></svg>
<span class="t hl" style="left:0;top:0;font-size:12.9px;transform:translate(130.91px,116.80px) scaleX(1.0645);font-weight:700;">HEADLINE</span>
<span class="t pp" style="left:0;top:0;font-size:6.7px;transform:translate(131.16px,134.20px) scaleX(1.0055);">Maecenas molestie ut risus q</span>
<span class="t pp" style="left:0;top:0;font-size:6.7px;transform:translate(131.26px,142.70px) scaleX(1.0109);">ultrices. Nullam sollicitudin jus</span>
<span class="t pp" style="left:0;top:0;font-size:6.7px;transform:translate(131.26px,151.20px) scaleX(1.0155);">mauris, at condimentum felis</span>
<span class="t pp" style="left:0;top:0;font-size:6.7px;transform:translate(131.26px,159.75px) scaleX(1.0175);">ut. Quisque sed eros eu velit</span>
<div class="btn" style="left:132px;top:173.8px;width:47.3px;height:17.3px"></div>
<span class="t bt" style="left:0;top:0;font-size:7.1px;transform:translate(136.33px,179.70px) scaleX(0.9860);font-weight:700;">Take Action</span>
</div>
<a class="t lk" style="left:0;top:261.00px;font-size:15.4px;transform:translateX(560.64px) scaleX(0.9976);" href="#">Welcome Email - Oct 4, 2020</a>
</section>
<section class="card" id="sent" style="left:20px;top:609px;width:513px;height:343px">
<h2 class="t hd" style="left:0;top:25.00px;font-size:25.6px;transform:translateX(20.22px) scaleX(0.7708);">Recently sent</h2>
<span class="t gr" style="left:0;top:74.00px;font-size:15.4px;transform:translateX(19.92px) scaleX(1.0054);">October 7, 2020</span>
<a class="t lk" style="left:0;top:98.00px;font-size:15.4px;transform:translateX(20.49px) scaleX(0.9825);" href="#">Welcome Email - Oct 7, 2020</a>
<em class="t gr" style="left:0;top:122.00px;font-size:15.4px;transform:translateX(19.39px) scaleX(0.9257);font-style:italic;">Welcome to Ridgeview!</em>
<span class="t num" style="left:0;top:148.00px;font-size:22.5px;transform:translateX(19.89px) scaleX(0.7869);">3.5K</span>
<span class="t num" style="left:0;top:148.00px;font-size:22.5px;transform:translateX(121.10px) scaleX(0.7085);">2,951</span>
<span class="t num" style="left:0;top:148.00px;font-size:22.5px;transform:translateX(192.69px) scaleX(0.7183);">2,951</span>
<span class="t gr" style="left:0;top:173.00px;font-size:15.4px;transform:translateX(19.38px) scaleX(0.9936);">Recipients</span>
<span class="t gr" style="left:0;top:173.00px;font-size:15.4px;transform:translateX(121.16px) scaleX(0.9564);">Clicks</span>
<span class="t gr" style="left:0;top:173.00px;font-size:15.4px;transform:translateX(192.86px) scaleX(0.9806);">Opens</span>
<span class="t gr" style="left:0;top:212.00px;font-size:15.4px;transform:translateX(19.92px) scaleX(1.0319);">October 6, 2020</span>
<a class="t lk" style="left:0;top:236.00px;font-size:15.4px;transform:translateX(20.49px) scaleX(0.9977);" href="#">Welcome Email - Oct 6, 2020</a>
<em class="t gr" style="left:0;top:260.00px;font-size:15.4px;transform:translateX(19.39px) scaleX(0.9257);font-style:italic;">Welcome to Ridgeview!</em>
<span class="t num" style="left:0;top:286.00px;font-size:22.5px;transform:translateX(19.89px) scaleX(0.7869);">3.5K</span>
<span class="t num" style="left:0;top:286.00px;font-size:22.5px;transform:translateX(121.10px) scaleX(0.7085);">2,951</span>
<span class="t num" style="left:0;top:286.00px;font-size:22.5px;transform:translateX(192.69px) scaleX(0.7183);">2,951</span>
<span class="t gr" style="left:0;top:311.00px;font-size:15.4px;transform:translateX(19.38px) scaleX(0.9936);">Recipients</span>
<span class="t gr" style="left:0;top:311.00px;font-size:15.4px;transform:translateX(121.16px) scaleX(0.9564);">Clicks</span>
<span class="t gr" style="left:0;top:311.00px;font-size:15.4px;transform:translateX(192.86px) scaleX(0.9806);">Opens</span>
</section>
<section class="card" id="scheduled" style="left:553px;top:609px;width:512px;height:343px">
<h2 class="t hd" style="left:0;top:25.00px;font-size:25.6px;transform:translateX(22.77px) scaleX(0.7700);">Scheduled emails</h2>
<div class="more" style="left:459px;top:21px"><i></i><i></i><i></i></div>
<span class="t gr" style="left:0;top:74.00px;font-size:15.4px;transform:translateX(22.39px) scaleX(0.9798);">November 1, 8:00 AM</span>
<a class="t lk" style="left:0;top:98.00px;font-size:15.4px;transform:translateX(22.59px) scaleX(1.0126);" href="#">November Newsletter</a>
<span class="t gr" style="left:0;top:122.00px;font-size:15.4px;transform:translateX(22.47px) scaleX(1.0086);">Subject</span>
<span class="t gr" style="left:0;top:122.00px;font-size:15.4px;transform:translateX(232.51px) scaleX(0.9674);">List</span>
<span class="t" style="left:0;top:144.00px;font-size:15.4px;transform:translateX(22.37px) scaleX(0.9998);">November news and events</span>
<span class="t" style="left:0;top:144.00px;font-size:15.4px;transform:translateX(232.45px) scaleX(1.0141);">Newsletters</span>
<span class="t gr" style="left:0;top:183.00px;font-size:15.4px;transform:translateX(22.61px) scaleX(1.0113);">November 26, 8:00 AM</span>
<a class="t lk" style="left:0;top:207.00px;font-size:15.4px;transform:translateX(23.29px) scaleX(1.0103);" href="#">Thanksgiving 2020</a>
<span class="t gr" style="left:0;top:231.00px;font-size:15.4px;transform:translateX(22.47px) scaleX(1.0086);">Subject</span>
<span class="t gr" style="left:0;top:231.00px;font-size:15.4px;transform:translateX(181.18px) scaleX(0.9939);">List</span>
<span class="t" style="left:0;top:253.00px;font-size:15.4px;transform:translateX(22.62px) scaleX(0.9972);">Happy Thanksgiving</span>
<span class="t" style="left:0;top:253.00px;font-size:15.4px;transform:translateX(181.17px) scaleX(1.0021);">Holidays</span>
<a class="t lk" style="left:0;top:299.00px;font-size:15.4px;transform:translateX(23.44px) scaleX(0.9892);" href="#">View all scheduled emails</a>
</section>
</main>
<aside>
<h3 class="t gr" style="left:0;top:119.00px;font-size:19.2px;transform:translateX(1096.07px) scaleX(0.9930);">Related links</h3>
<a class="t lk" style="left:0;top:152.00px;font-size:15.4px;transform:translateX(1097.36px) scaleX(0.9735);" href="#">All emails</a>
<a class="t lk" style="left:0;top:181.00px;font-size:15.4px;transform:translateX(1096.62px) scaleX(1.0007);" href="#">Draft emails</a>
<a class="t lk" style="left:0;top:210.00px;font-size:15.4px;transform:translateX(1096.40px) scaleX(0.9859);" href="#">Sent emails</a>
<a class="t lk" style="left:0;top:239.00px;font-size:15.4px;transform:translateX(1096.39px) scaleX(0.9882);" href="#">Scheduled emails</a>
<a class="t lk" style="left:0;top:268.00px;font-size:15.4px;transform:translateX(1096.37px) scaleX(0.9979);" href="#">Email settings</a>
<h3 class="t gr" style="left:0;top:308.00px;font-size:19.2px;transform:translateX(1096.08px) scaleX(0.9874);">Recently accessed</h3>
<a class="t lk" style="left:0;top:341.00px;font-size:15.4px;transform:translateX(1097.49px) scaleX(0.9982);" href="#">Welcome Email - Oct 8, 2020</a>
<a class="t lk" style="left:0;top:370.00px;font-size:15.4px;transform:translateX(1097.49px) scaleX(0.9982);" href="#">Welcome Email - Oct 4, 2020</a>
<a class="t lk" style="left:0;top:399.00px;font-size:15.4px;transform:translateX(1097.49px) scaleX(0.9899);" href="#">Welcome Email - Oct 9, 2020</a>
<a class="t lk" style="left:0;top:428.00px;font-size:15.4px;transform:translateX(1097.49px) scaleX(0.9982);" href="#">Welcome Email - Oct 3, 2020</a>
<a class="t lk" style="left:0;top:457.00px;font-size:15.4px;transform:translateX(1097.49px) scaleX(0.9982);" href="#">Welcome Email - Oct 2, 2020</a>
</aside>
</body></html>
